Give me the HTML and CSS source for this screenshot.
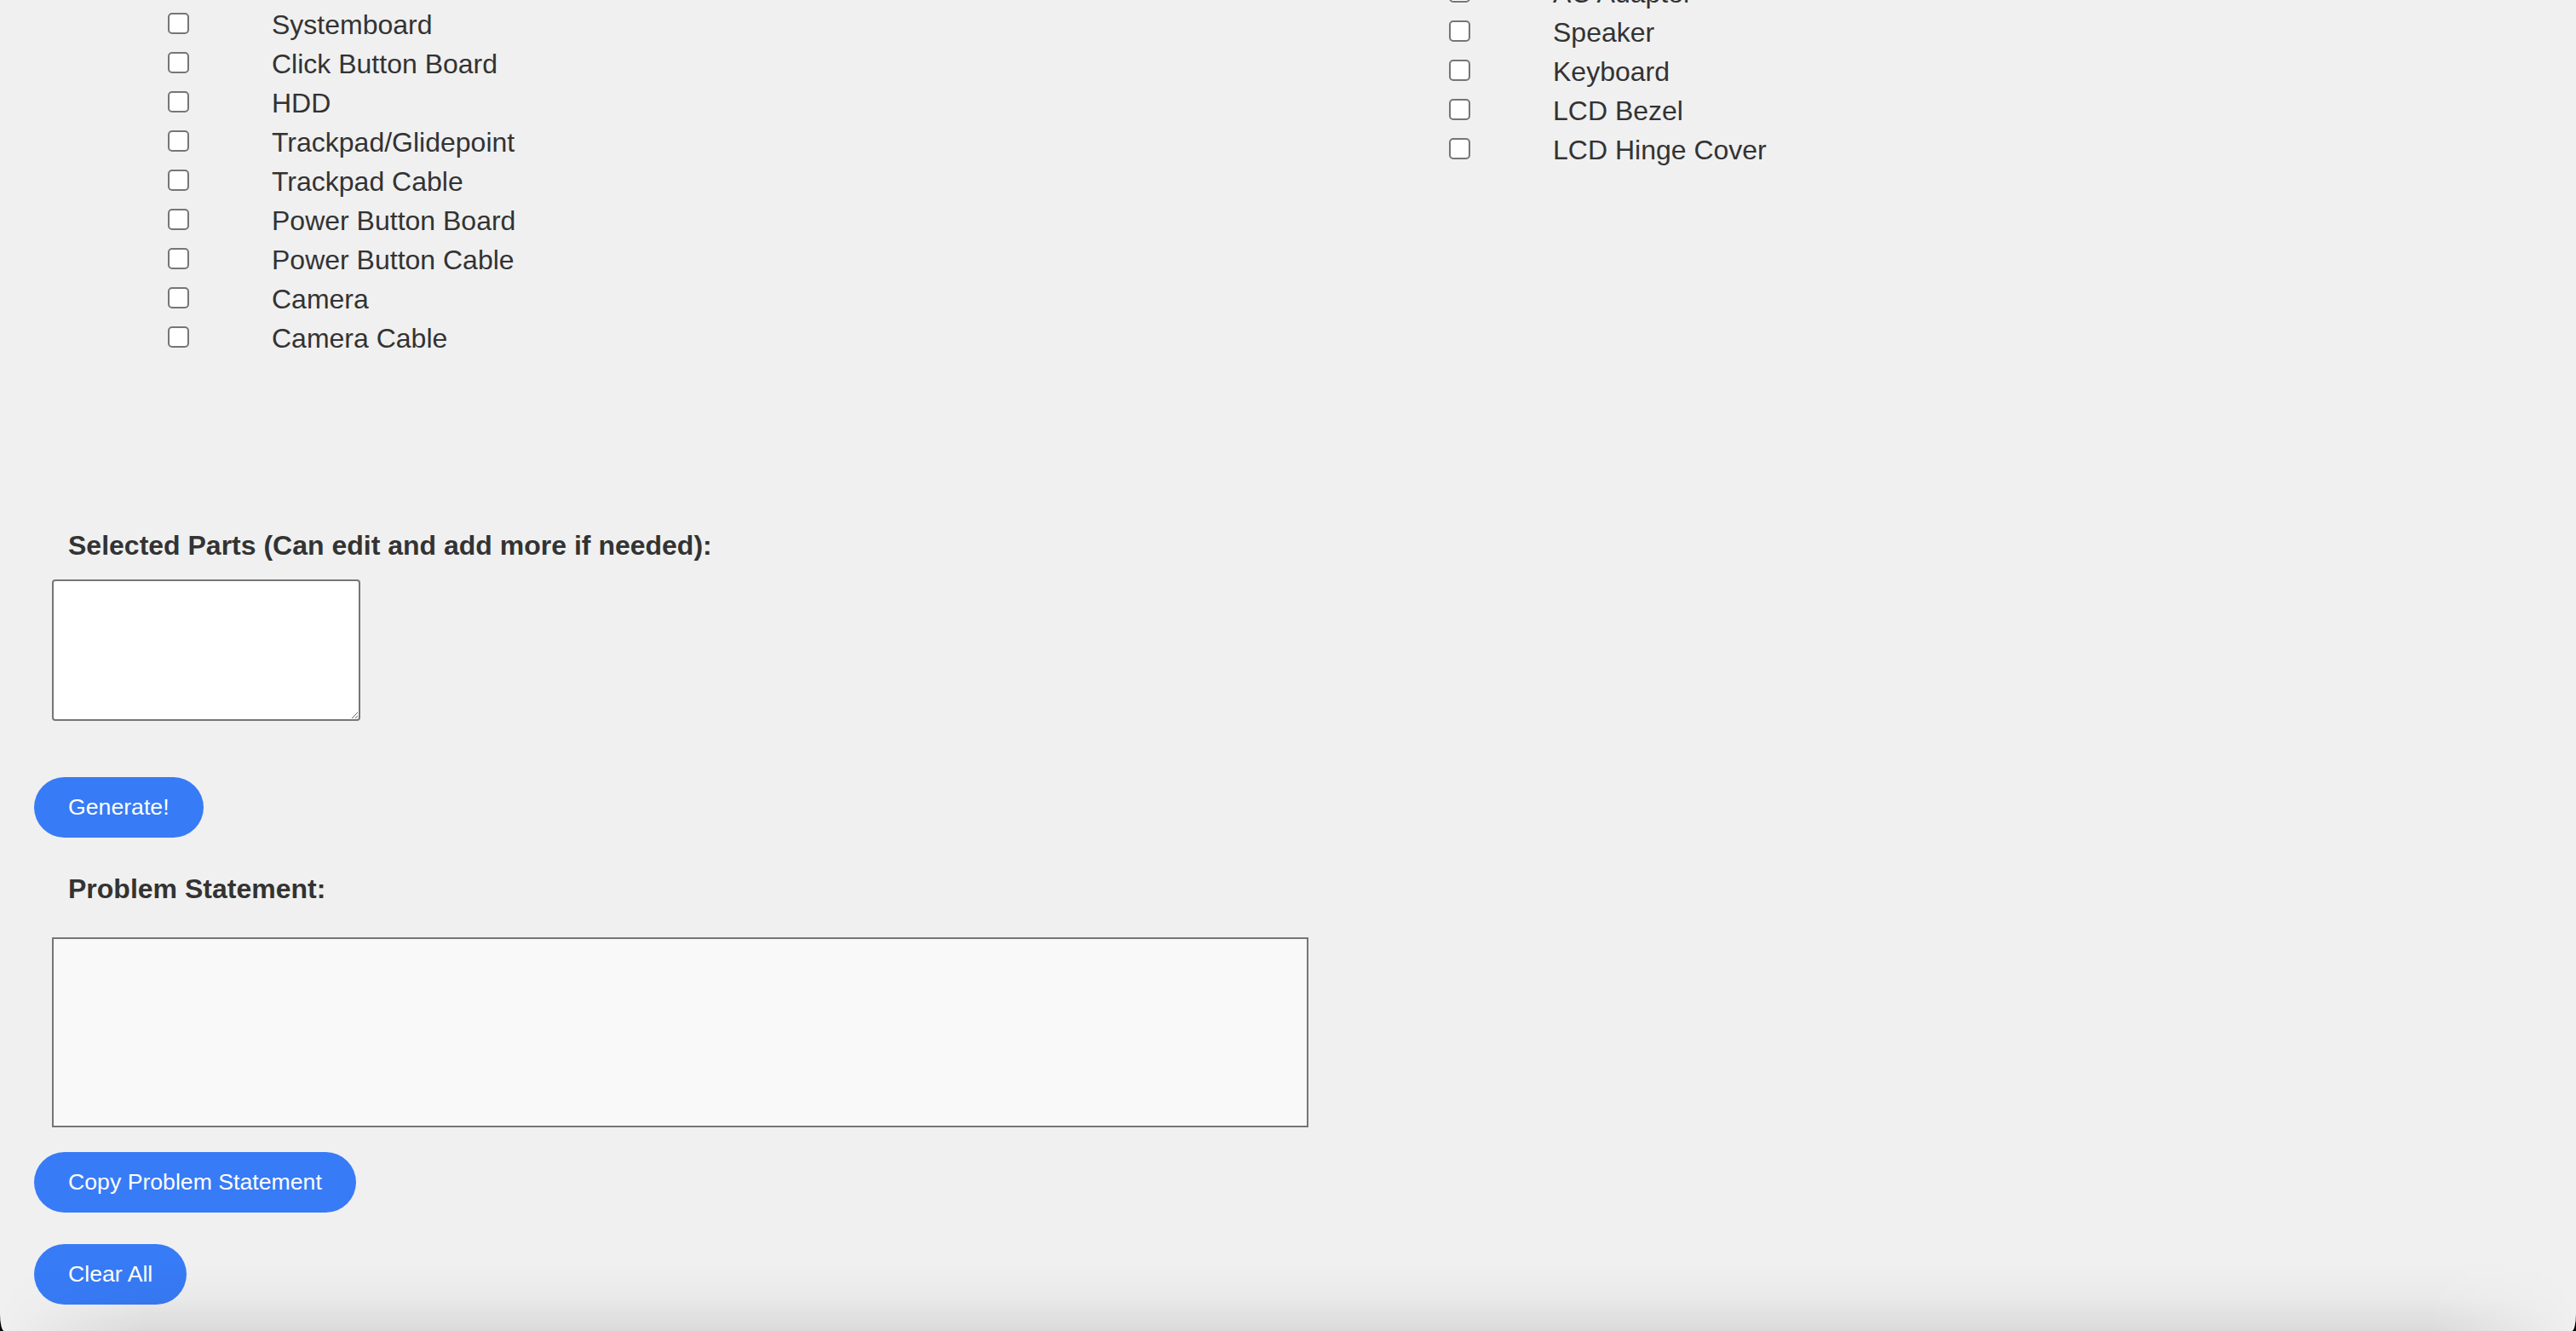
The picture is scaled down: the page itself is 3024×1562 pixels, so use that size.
FILE: index.html
```html
<!DOCTYPE html>
<html lang="en">
<head>
<meta charset="utf-8">
<title>Parts Problem Statement</title>
<link rel="stylesheet" href="styles.css">
</head>
<body>
<main class="page">
  <section class="parts">
    <div class="parts-col parts-col-left">
      <label class="part"><input type="checkbox" class="check"><span class="part-name">Systemboard</span></label>
      <label class="part"><input type="checkbox" class="check"><span class="part-name">Click Button Board</span></label>
      <label class="part"><input type="checkbox" class="check"><span class="part-name">HDD</span></label>
      <label class="part"><input type="checkbox" class="check"><span class="part-name">Trackpad/Glidepoint</span></label>
      <label class="part"><input type="checkbox" class="check"><span class="part-name">Trackpad Cable</span></label>
      <label class="part"><input type="checkbox" class="check"><span class="part-name">Power Button Board</span></label>
      <label class="part"><input type="checkbox" class="check"><span class="part-name">Power Button Cable</span></label>
      <label class="part"><input type="checkbox" class="check"><span class="part-name">Camera</span></label>
      <label class="part"><input type="checkbox" class="check"><span class="part-name">Camera Cable</span></label>
    </div>
    <div class="parts-col parts-col-right">
      <label class="part"><input type="checkbox" class="check"><span class="part-name">AC Adapter</span></label>
      <label class="part"><input type="checkbox" class="check"><span class="part-name">Speaker</span></label>
      <label class="part"><input type="checkbox" class="check"><span class="part-name">Keyboard</span></label>
      <label class="part"><input type="checkbox" class="check"><span class="part-name">LCD Bezel</span></label>
      <label class="part"><input type="checkbox" class="check"><span class="part-name">LCD Hinge Cover</span></label>
    </div>
  </section>

  <h2 class="section-title section-title-parts">Selected Parts (Can edit and add more if needed):</h2>
  <textarea class="selected-box"></textarea>
  <button class="btn btn-generate" type="button">Generate!</button>

  <h2 class="section-title section-title-problem">Problem Statement:</h2>
  <textarea class="problem-box" readonly></textarea>
  <button class="btn btn-copy" type="button">Copy Problem Statement</button>
  <button class="btn btn-clear" type="button">Clear All</button>
</main>
<div class="window-shade"></div>
<div class="window-frame"></div>
</body>
</html>
```
FILE: styles.css
```css
* {
  box-sizing: border-box;
}

html {
  background: #f0f0f0;
  overflow: hidden;
}

body {
  margin: 0;
  font-family: "Liberation Sans", Arial, Helvetica, sans-serif;
  color: #333333;
}

.page {
  padding-left: 40px;
}

.parts {
  display: grid;
  grid-template-columns: 1504px auto;
  margin: -33px 0 0 157px;
  align-items: start;
}

.parts-col-left {
  padding-top: 37.5px;
}

.part {
  display: flex;
  align-items: center;
  height: 46px;
}

.check {
  -webkit-appearance: none;
  appearance: none;
  flex: none;
  width: 25px;
  height: 25px;
  margin: 0;
  border: 2px solid #767676;
  border-radius: 5px;
  background: #ffffff;
}

.part-name {
  margin-left: 97px;
  padding-top: 4px;
  font-size: 32px;
  white-space: nowrap;
}

.section-title {
  margin: 0 0 0 40px;
  font-size: 32px;
  font-weight: bold;
  line-height: normal;
}

.section-title-parts {
  margin-top: 203px;
}

.section-title-problem {
  margin-top: 42px;
}

.selected-box {
  display: block;
  width: 362px;
  height: 166px;
  margin: 21px 0 0 21px;
  border: 2px solid #767676;
  border-radius: 4px;
  background: #ffffff;
}

.problem-box {
  display: block;
  width: 1475px;
  height: 223px;
  margin: 38px 0 0 21px;
  border: 2px solid #767676;
  border-radius: 0;
  background: #f9f9f9;
  resize: none;
}

.btn {
  display: block;
  padding: 20px 40px;
  border: none;
  border-radius: 40px;
  background: #387bf6;
  color: #ffffff;
  font-family: "Liberation Sans", Arial, Helvetica, sans-serif;
  font-size: 26.67px;
  line-height: 31px;
}

.btn-generate {
  margin-top: 66px;
}

.btn-copy {
  margin-top: 29px;
}

.btn-clear {
  margin-top: 37px;
}

.window-shade {
  position: fixed;
  left: 0;
  right: 0;
  bottom: 0;
  height: 80px;
  background: linear-gradient(to bottom, rgba(0, 0, 0, 0) 0%, rgba(0, 0, 0, 0.025) 50%, rgba(0, 0, 0, 0.09) 100%);
  -webkit-mask-image: linear-gradient(to right, transparent 0, #000 170px, #000 calc(100% - 170px), transparent 100%);
  mask-image: linear-gradient(to right, transparent 0, #000 170px, #000 calc(100% - 170px), transparent 100%);
  pointer-events: none;
}

.window-frame {
  position: fixed;
  inset: 0;
  border-bottom-left-radius: 5px 20px;
  border-bottom-right-radius: 5px 20px;
  box-shadow: 0 0 0 30px #000000;
  pointer-events: none;
}
```
